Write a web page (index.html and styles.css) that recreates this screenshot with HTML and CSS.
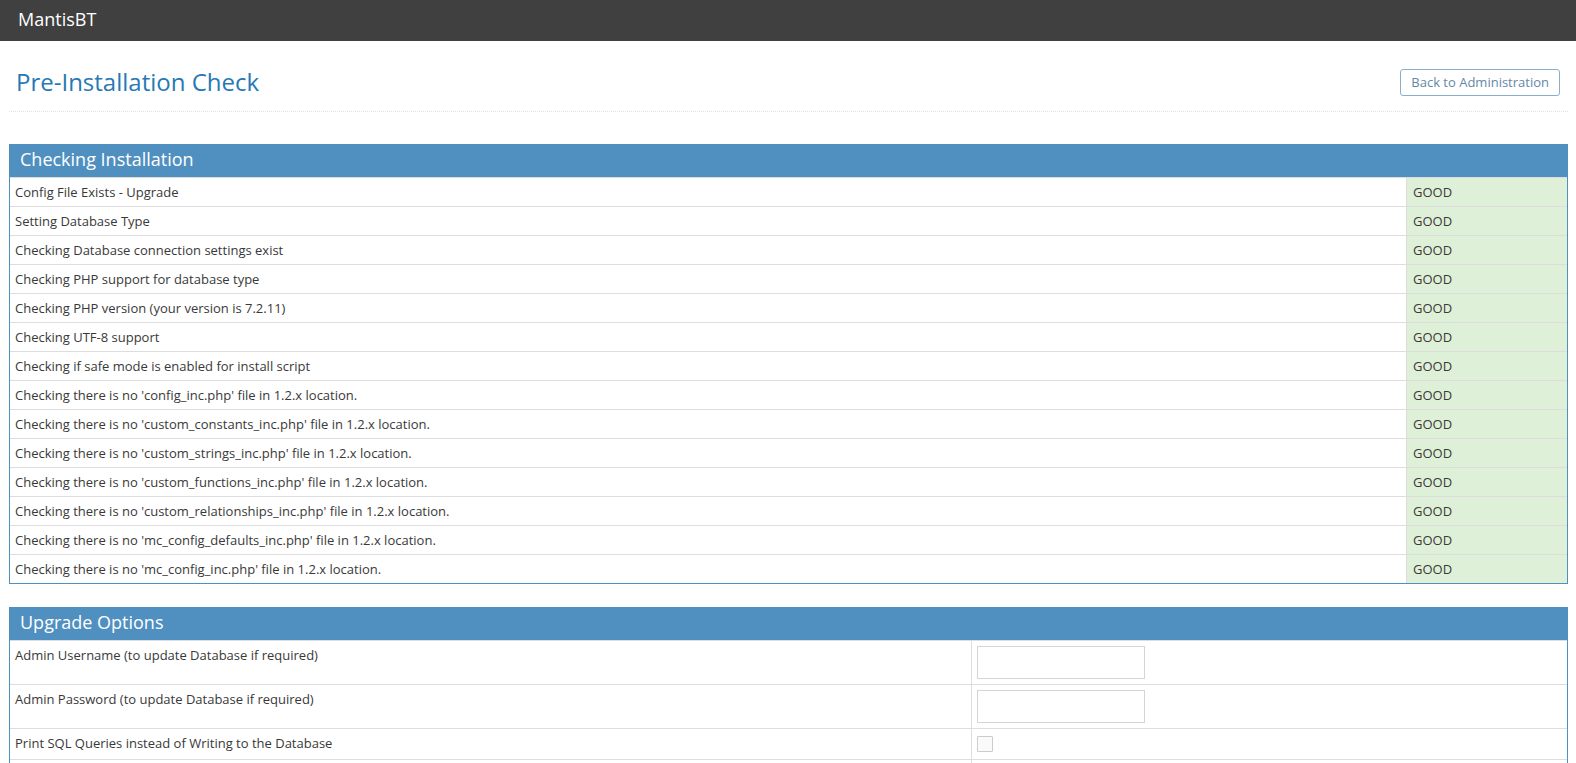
FILE: index.html
```html
<!DOCTYPE html>
<html>
<head>
<meta charset="utf-8">
<title>MantisBT - Pre-Installation Check</title>
<link rel="stylesheet" href="styles.css">
</head>
<body>
<div class="navbar"><span class="brand">MantisBT</span></div>
<div class="main">
  <div class="page-header">
    <h1 class="page-title">Pre-Installation Check</h1>
    <a class="btn-back" href="#">Back to Administration</a>
  </div>

  <div class="widget">
    <div class="widget-header">Checking Installation</div>
    <div class="check-row"><div class="cell">Config File Exists - Upgrade</div><div class="cell status">GOOD</div></div>
    <div class="check-row"><div class="cell">Setting Database Type</div><div class="cell status">GOOD</div></div>
    <div class="check-row"><div class="cell">Checking Database connection settings exist</div><div class="cell status">GOOD</div></div>
    <div class="check-row"><div class="cell">Checking PHP support for database type</div><div class="cell status">GOOD</div></div>
    <div class="check-row"><div class="cell">Checking PHP version (your version is 7.2.11)</div><div class="cell status">GOOD</div></div>
    <div class="check-row"><div class="cell">Checking UTF-8 support</div><div class="cell status">GOOD</div></div>
    <div class="check-row"><div class="cell">Checking if safe mode is enabled for install script</div><div class="cell status">GOOD</div></div>
    <div class="check-row"><div class="cell">Checking there is no 'config_inc.php' file in 1.2.x location.</div><div class="cell status">GOOD</div></div>
    <div class="check-row"><div class="cell">Checking there is no 'custom_constants_inc.php' file in 1.2.x location.</div><div class="cell status">GOOD</div></div>
    <div class="check-row"><div class="cell">Checking there is no 'custom_strings_inc.php' file in 1.2.x location.</div><div class="cell status">GOOD</div></div>
    <div class="check-row"><div class="cell">Checking there is no 'custom_functions_inc.php' file in 1.2.x location.</div><div class="cell status">GOOD</div></div>
    <div class="check-row"><div class="cell">Checking there is no 'custom_relationships_inc.php' file in 1.2.x location.</div><div class="cell status">GOOD</div></div>
    <div class="check-row"><div class="cell">Checking there is no 'mc_config_defaults_inc.php' file in 1.2.x location.</div><div class="cell status">GOOD</div></div>
    <div class="check-row"><div class="cell">Checking there is no 'mc_config_inc.php' file in 1.2.x location.</div><div class="cell status">GOOD</div></div>
  </div>

  <div class="widget">
    <div class="widget-header">Upgrade Options</div>
    <div class="opt-row"><div class="cell">Admin Username (to update Database if required)</div><div class="cell field"><input class="text-input" type="text"></div></div>
    <div class="opt-row"><div class="cell">Admin Password (to update Database if required)</div><div class="cell field"><input class="text-input" type="password"></div></div>
    <div class="opt-row"><div class="cell">Print SQL Queries instead of Writing to the Database</div><div class="cell field check-cell"><input class="checkbox" type="checkbox"></div></div>
    <div class="opt-row opt-row-empty"><div class="cell"></div><div class="cell field"></div></div>
  </div>
</div>
</body>
</html>
```

FILE: styles.css
```css
* { box-sizing: border-box; }

body {
  margin: 0;
  background: #fff;
  font-family: "Open Sans", "Liberation Sans", sans-serif;
  font-size: 13px;
  line-height: 18px;
  color: #393939;
}

.navbar {
  height: 41px;
  background: #404040;
  padding: 7px 18px 0;
}

.brand {
  color: #fff;
  font-size: 18px;
  line-height: 24px;
}

.main {
  padding: 24px 8px 0 9px;
}

.page-header {
  display: flex;
  align-items: center;
  justify-content: space-between;
  padding: 0 8px 13px 7px;
  border-bottom: 1px dotted #e2e2e2;
  margin-bottom: 32px;
}

.page-title {
  margin: 0;
  font-size: 24px;
  line-height: 33px;
  font-weight: 400;
  color: #2679b5;
}

.btn-back {
  margin-top: 2px;
  display: inline-block;
  padding: 4px 10px;
  font-size: 13px;
  line-height: 17px;
  color: #6688a6;
  border: 1px solid #8aafce;
  border-radius: 3px;
  text-decoration: none;
  background: #fff;
}

.widget {
  border: 1px solid #5090c1;
  margin-bottom: 23px;
}

.widget-header {
  height: 32px;
  background: #5090c1;
  color: #fff;
  font-size: 18px;
  line-height: 29px;
  padding: 0 10px;
}

.check-row {
  display: grid;
  grid-template-columns: 1fr 161px;
  border-top: 1px solid #ddd;
}

.opt-row {
  display: grid;
  grid-template-columns: 961px 1fr;
  border-top: 1px solid #ddd;
}

.opt-row-empty {
  min-height: 40px;
}

.cell {
  padding: 5px;
  line-height: 18px;
}

.status {
  background: #dff0d8;
  border-left: 1px solid #ddd;
  padding-left: 6px;
}

.field {
  border-left: 1px solid #ddd;
}

.check-cell {
  padding-top: 7px;
  padding-bottom: 7px;
}

.text-input {
  display: block;
  width: 168px;
  height: 33px;
  margin: 0;
  border: 1px solid #d5d5d5;
  background: #fff;
  font-family: inherit;
}

.checkbox {
  display: block;
  appearance: none;
  -webkit-appearance: none;
  width: 16px;
  height: 16px;
  margin: 0;
  border: 1px solid #ccc;
  border-radius: 1px;
  background: #fafafa;
}
```
